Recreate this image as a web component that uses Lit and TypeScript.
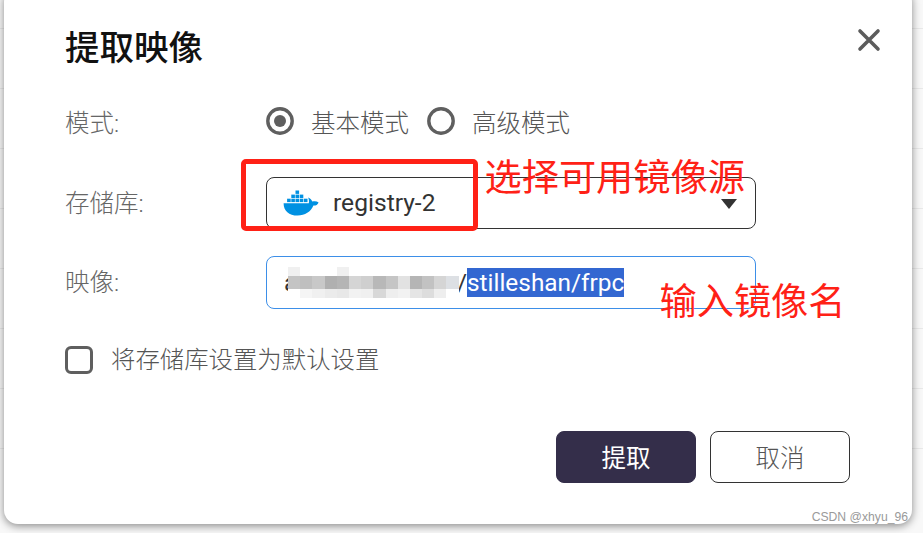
import { LitElement, html, css } from "lit";
import { customElement } from "lit/decorators.js";

const MOSAIC = [
  ["#f0f0f0","#fff","#fff","#fff","#f0f0f0","#fff","#fff","#fff","#fff","#fff","#fff","#fff","#fff","#fff"],
  ["#c4c4c4","#bfbfbf","#c8c8c8","#b0b0b0","#b5b5b5","#d5d5d5","#cfcfcf","#b8b8b8","#c5c5c5","#e2e2e2","#b5b5b5","#c2c2c2","#d5d5d5","#dde0e4"],
  ["#fff","#f5f5f5","#f0f0f0","#ebebeb","#e8e8e8","#f2f2f2","#f0f0f0","#d8d8d8","#eeeeee","#f2f2f2","#e5e5e5","#dddddd","#eeeeee","#fff"],
];

@customElement("app-root")
export class AppRoot extends LitElement {
  static styles = css`
    :host {
      display: block;
      position: relative;
      width: 923px;
      height: 533px;
      overflow: hidden;
      box-sizing: border-box;
      background: repeating-linear-gradient(to bottom, #f8f8f8 0, #f8f8f8 59px, #e9e9e9 59px, #e9e9e9 60px) 0 -31px;
      font-family: "Roboto", "Noto Sans CJK SC", sans-serif;
      color: #444;
    }
    .dialog {
      box-sizing: border-box;
      width: 908px;
      height: 536px;
      margin: -12px 0 0 3.5px;
      padding: 22px 0 0 61.5px;
      background: #fff;
      border-radius: 14px;
      box-shadow: 0 2px 8px rgba(0, 0, 0, 0.45);
      display: flex;
      flex-direction: column;
    }
    .head {
      display: flex;
      justify-content: space-between;
      align-items: center;
      height: 70px;
      padding-right: 31px;
    }
    h1 {
      margin: 0;
      font: 500 34.5px/70px "Noto Sans CJK SC", sans-serif;
      color: #111;
    }
    .close { width: 24px; height: 24px; margin-top: -10px; display: block; }
    .row { display: flex; align-items: center; }
    .label {
      width: 201px;
      flex: none;
      font-size: 24.5px;
      font-weight: 300;
      color: #666;
      margin-bottom: 4px;
    }
    .modes { height: 48px; margin-top: 17px; }
    .modes .label { margin-bottom: 0; width: 200px; }
    .radios { display: flex; gap: 17px; }
    .radio {
      display: flex;
      align-items: center;
      gap: 16px;
      font-size: 24.5px;
      font-weight: 300;
      color: #555;
    }
    .radio svg { display: block; width: 30px; height: 30px; }
    .field {
      box-sizing: border-box;
      width: 490px;
      border-radius: 8px;
      border: 1px solid #333;
      display: flex;
      align-items: center;
      position: relative;
      font-size: 24.6px;
    }
    .select { height: 52px; padding-left: 16px; gap: 13px; color: #333; }
    .select-row { margin-top: 32px; }
    .select span { margin-bottom: 2px; }
    .whale { width: 37px; height: 28px; display: block; }
    .caret {
      position: absolute;
      right: 18px;
      top: 21px;
      width: 0;
      height: 0;
      border-left: 8px solid transparent;
      border-right: 8px solid transparent;
      border-top: 10px solid #333;
    }
    .input-row { margin-top: 27px; }
    .input { height: 53px; border-color: #3d8fe8; padding-left: 17px; color: #333; font-size: 24.4px; }
    .prefix { width: 183px; flex: none; display: flex; justify-content: space-between; }
    .sel { background: #3367d1; color: #fff; line-height: 29px; }
    .mosaic {
      position: absolute;
      left: 21px;
      top: 10px;
      display: grid;
      grid-template-columns: repeat(14, 12.2px);
      grid-template-rows: 9px 13px 9px;
    }
    .check { margin-top: 25px; gap: 18px; font-size: 24.4px; font-weight: 300; color: #555; height: 50px; }
    .check span { margin-bottom: 4px; }
    .box {
      box-sizing: border-box;
      width: 28px;
      height: 28px;
      margin-top: 2px;
      border: 3.5px solid #5f5f5f;
      border-radius: 6px;
    }
    .footer {
      margin-top: 47px;
      gap: 14px;
      padding-left: 491px;
    }
    .btn {
      box-sizing: border-box;
      width: 140px;
      height: 52px;
      padding-bottom: 2px;
      border-radius: 8px;
      border: 1px solid #333;
      display: flex;
      align-items: center;
      justify-content: center;
      font-size: 24.5px;
      font-weight: 300;
      color: #555;
      background: #fff;
    }
    .primary { background: #342e4a; border-color: #342e4a; color: #fff; font-weight: 400; }
    .frame {
      position: absolute;
      left: 241px;
      top: 159px;
      width: 237px;
      height: 72px;
      box-sizing: border-box;
      border: 5px solid #ff2116;
      border-radius: 5px;
    }
    .note {
      position: absolute;
      color: #ff2116;
      font: 400 37.2px/44px "Noto Sans CJK SC", sans-serif;
      white-space: nowrap;
    }
    .n1 { left: 484.5px; top: 153px; }
    .n2 { left: 659.5px; top: 277px; }
    .mark {
      position: absolute;
      right: 15px;
      bottom: 8px;
      font: 12.2px/15px "Liberation Sans", sans-serif;
      color: #9a9a9a;
    }
  `;

  render() {
    return html`
      <div class="dialog">
        <div class="head">
          <h1>提取映像</h1>
          <svg class="close" viewBox="0 0 24 24">
            <path d="M3 3L21 21M21 3L3 21" stroke="#5c5c5c" stroke-width="3.6" stroke-linecap="round" fill="none" />
          </svg>
        </div>
        <div class="row modes">
          <div class="label">模式:</div>
          <div class="radios">
            <div class="radio">
              <svg viewBox="0 0 30 30"><circle cx="15" cy="15" r="12.2" fill="none" stroke="#5f5f5f" stroke-width="3.4" /><circle cx="15" cy="15" r="6" fill="#5f5f5f" /></svg>
              <span>基本模式</span>
            </div>
            <div class="radio">
              <svg viewBox="0 0 30 30"><circle cx="15" cy="15" r="12.2" fill="none" stroke="#5f5f5f" stroke-width="3.4" /></svg>
              <span>高级模式</span>
            </div>
          </div>
        </div>
        <div class="row select-row">
          <div class="label">存储库:</div>
          <div class="field select">
            <svg class="whale" viewBox="0 0 37 28">
              <g fill="#0091e2">
                <rect x="12.5" y="1.5" width="3.6" height="3.4" />
                <rect x="8.3" y="5.6" width="3.6" height="3.4" /><rect x="12.5" y="5.6" width="3.6" height="3.4" /><rect x="16.7" y="5.6" width="3.6" height="3.4" />
                <rect x="4.1" y="9.7" width="3.6" height="3.4" /><rect x="8.3" y="9.7" width="3.6" height="3.4" /><rect x="12.5" y="9.7" width="3.6" height="3.4" /><rect x="16.7" y="9.7" width="3.6" height="3.4" /><rect x="20.9" y="9.7" width="3.6" height="3.4" />
                <path d="M0.6 14.2H25.8C26.2 12.2 26 10 25 8.4C27.4 9.2 28.8 10.8 29.3 12.6C31.4 11.8 33.8 12 35.6 13.4C34.8 15.6 32.6 16.8 30.4 16.6C27.8 22.8 22 26.6 14.6 26.6C6 26.6 0.6 22 0.6 14.2Z" />
              </g>
            </svg>
            <span>registry-2</span>
            <div class="caret"></div>
          </div>
        </div>
        <div class="row input-row">
          <div class="label">映像:</div>
          <div class="field input">
            <span class="prefix"><span>ac</span><span>/</span></span>
            <span class="sel">stilleshan/frpc</span>
            <div class="mosaic">
              ${MOSAIC.flat().map((c) => html`<i style="background:${c}"></i>`)}
            </div>
          </div>
        </div>
        <div class="row check">
          <div class="box"></div>
          <span>将存储库设置为默认设置</span>
        </div>
        <div class="row footer">
          <div class="btn primary">提取</div>
          <div class="btn">取消</div>
        </div>
      </div>
      <div class="frame"></div>
      <div class="note n1">选择可用镜像源</div>
      <div class="note n2">输入镜像名</div>
      <div class="mark">CSDN @xhyu_96</div>
    `;
  }
}
